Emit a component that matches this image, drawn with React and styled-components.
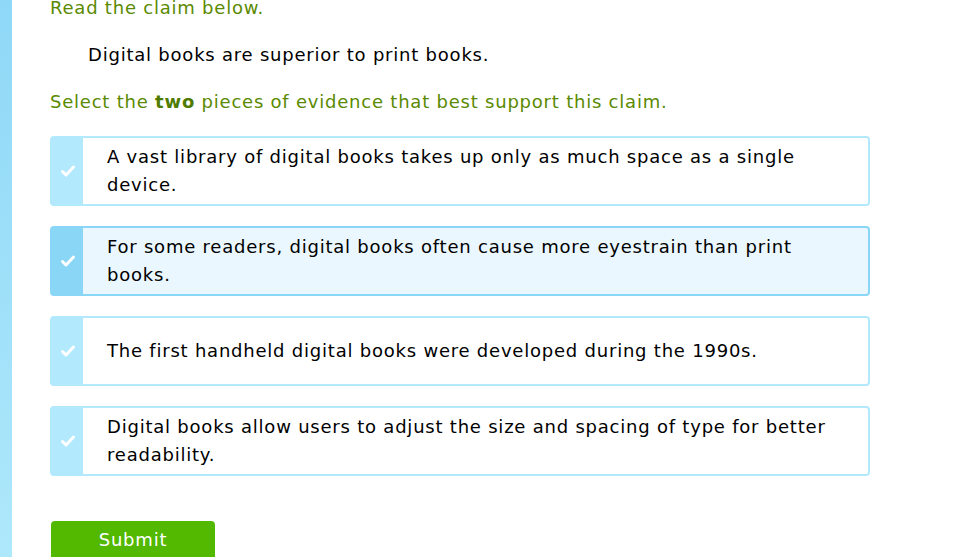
import React, { useState } from "react";
import styled, { createGlobalStyle } from "styled-components";

const GlobalStyle = createGlobalStyle`
  html, body {
    margin: 0;
    padding: 0;
    background: #ffffff;
    font-family: "DejaVu Sans", Verdana, sans-serif;
    letter-spacing: 0.78px;
    overflow: hidden;
  }
`;

const Page = styled.div`
  display: flex;
  height: 557px;
  overflow: hidden;
`;

const SideBar = styled.div`
  width: 12px;
  flex-shrink: 0;
  background: linear-gradient(to bottom, #8fd8f7, #aee8fb);
`;

const Content = styled.div`
  flex: 1;
  padding-left: 38px;
  display: flex;
  flex-direction: column;
  align-items: flex-start;
`;

const Direction = styled.div`
  font-size: 18px;
  line-height: 28px;
  color: #5a8a00;
  margin-top: ${(p) => p.$top || 0}px;

  b {
    color: #4f7c00;
  }
`;

const Claim = styled.div`
  font-size: 18px;
  line-height: 28px;
  color: #000;
  margin: 19px 0 19px 38px;
`;

const Choices = styled.div`
  display: flex;
  flex-direction: column;
  gap: 20px;
  margin-top: 20px;
  width: 820px;
`;

const Choice = styled.div`
  display: flex;
  min-height: 70px;
  box-sizing: border-box;
  border: 2px solid ${(p) => (p.$active ? "#8ad6f6" : "#b3e9fd")};
  border-radius: 4px;
  background: ${(p) => (p.$active ? "#eaf7fe" : "#ffffff")};
  cursor: pointer;
`;

const CheckStrip = styled.div`
  width: 31px;
  flex-shrink: 0;
  display: flex;
  align-items: center;
  justify-content: center;
  background: ${(p) => (p.$active ? "#8ad6f6" : "#b3e9fd")};
`;

const ChoiceText = styled.div`
  flex: 1;
  display: flex;
  align-items: center;
  padding: 5px 20px 5px 24px;
  font-size: 18px;
  line-height: 28px;
  color: #000;
`;

const SubmitButton = styled.button`
  margin-top: 45px;
  margin-left: 1px;
  width: 164px;
  height: 40px;
  border: none;
  border-radius: 4px;
  background: #52b800;
  color: #fff;
  font-family: "DejaVu Sans", Verdana, sans-serif;
  font-size: 18px;
  letter-spacing: 0.78px;
  padding: 0 0 1px;
  line-height: 38px;
  cursor: pointer;
`;

const Check = () => (
  <svg width="16" height="14" viewBox="0 0 16 14">
    <path
      d="M2.5 7.5 L6 11 L13.5 3"
      fill="none"
      stroke="#fff"
      strokeWidth="3"
      strokeLinecap="round"
      strokeLinejoin="round"
    />
  </svg>
);

const choices = [
  "A vast library of digital books takes up only as much space as a single device.",
  "For some readers, digital books often cause more eyestrain than print books.",
  "The first handheld digital books were developed during the 1990s.",
  "Digital books allow users to adjust the size and spacing of type for better readability.",
];

export default function App() {
  const [active] = useState(1);

  return (
    <>
      <GlobalStyle />
      <Page>
        <SideBar />
        <Content>
          <Direction $top={-6}>Read the claim below.</Direction>
          <Claim>Digital books are superior to print books.</Claim>
          <Direction>
            Select the <b>two</b> pieces of evidence that best support this claim.
          </Direction>
          <Choices>
            {choices.map((text, i) => (
              <Choice key={i} $active={i === active}>
                <CheckStrip $active={i === active}>
                  <Check />
                </CheckStrip>
                <ChoiceText>{text}</ChoiceText>
              </Choice>
            ))}
          </Choices>
          <SubmitButton>Submit</SubmitButton>
        </Content>
      </Page>
    </>
  );
}
